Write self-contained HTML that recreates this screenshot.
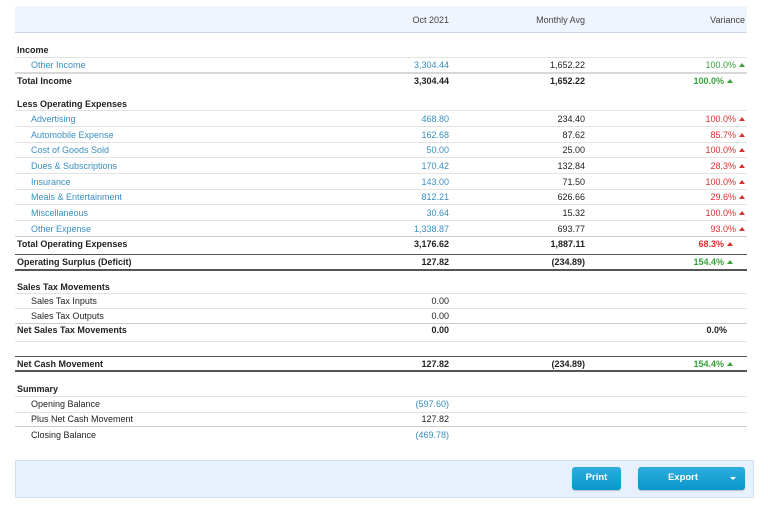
<!DOCTYPE html>
<html><head><meta charset="utf-8"><style>
body{margin:0;width:768px;height:512px;background:#fff;font-family:"Liberation Sans",Tahoma,sans-serif;font-size:9px;color:#222;position:relative;overflow:hidden}
.r{position:absolute;left:15px;width:732px;height:14px;line-height:14px}
.r span{position:absolute;white-space:nowrap}
.l{left:2px}.i{left:16px}
.a{right:298px;text-align:right}
.m{right:162px;text-align:right}
.v{right:2px;text-align:right}
.b{font-weight:bold}
.bl{color:#3a8fc0}
.g{color:#3aa03a}.rd{color:#d9302c}
.up{display:inline-block;width:0;height:0;border-left:3.5px solid transparent;border-right:3.5px solid transparent;border-bottom:4px solid currentColor;margin-left:3px;vertical-align:1px}
.ln{position:absolute;left:15px;width:732px;height:1px;background:#e2e2e2}
.dk{background:#555}
.btn{position:absolute;top:467px;height:23px;border-radius:3px;background:linear-gradient(#2eaee0,#0a95c8);color:#fff;font-weight:bold;font-size:9.5px;line-height:22px;text-align:center;box-shadow:0 1px 1px rgba(0,0,0,.2)}
</style></head><body>
<div style="position:absolute;left:15px;top:6px;width:732px;height:26px;background:#f0f4fc;border-bottom:1px solid #cdd6e4"></div>
<div class="r" style="top:13px;color:#444"><span class="a">Oct 2021</span><span class="m">Monthly Avg</span><span class="v">Variance</span></div>

<div class="r b" style="top:43px"><span class="l">Income</span></div>
<div class="ln" style="top:57px"></div>
<div class="r" style="top:58px"><span class="i bl">Other Income</span><span class="a bl">3,304.44</span><span class="m">1,652.22</span><span class="v g">100.0%<i class="up"></i></span></div>
<div class="ln" style="top:72px;height:2px;background:#d8d8d8"></div>
<div class="r b" style="top:74px"><span class="l">Total Income</span><span class="a">3,304.44</span><span class="m">1,652.22</span><span class="v g" style="right:14px">100.0%<i class="up"></i></span></div>

<div class="r b" style="top:97px"><span class="l">Less Operating Expenses</span></div>
<div class="ln" style="top:110px"></div>
<div class="r" style="top:112px"><span class="i bl">Advertising</span><span class="a bl">468.80</span><span class="m">234.40</span><span class="v rd">100.0%<i class="up"></i></span></div>
<div class="ln" style="top:126px"></div>
<div class="r" style="top:128px"><span class="i bl">Automobile Expense</span><span class="a bl">162.68</span><span class="m">87.62</span><span class="v rd">85.7%<i class="up"></i></span></div>
<div class="ln" style="top:142px"></div>
<div class="r" style="top:143px"><span class="i bl">Cost of Goods Sold</span><span class="a bl">50.00</span><span class="m">25.00</span><span class="v rd">100.0%<i class="up"></i></span></div>
<div class="ln" style="top:157px"></div>
<div class="r" style="top:159px"><span class="i bl">Dues &amp; Subscriptions</span><span class="a bl">170.42</span><span class="m">132.84</span><span class="v rd">28.3%<i class="up"></i></span></div>
<div class="ln" style="top:173px"></div>
<div class="r" style="top:175px"><span class="i bl">Insurance</span><span class="a bl">143.00</span><span class="m">71.50</span><span class="v rd">100.0%<i class="up"></i></span></div>
<div class="ln" style="top:189px"></div>
<div class="r" style="top:190px"><span class="i bl">Meals &amp; Entertainment</span><span class="a bl">812.21</span><span class="m">626.66</span><span class="v rd">29.6%<i class="up"></i></span></div>
<div class="ln" style="top:204px"></div>
<div class="r" style="top:206px"><span class="i bl">Miscellaneous</span><span class="a bl">30.64</span><span class="m">15.32</span><span class="v rd">100.0%<i class="up"></i></span></div>
<div class="ln" style="top:220px"></div>
<div class="r" style="top:222px"><span class="i bl">Other Expense</span><span class="a bl">1,338.87</span><span class="m">693.77</span><span class="v rd">93.0%<i class="up"></i></span></div>
<div class="ln" style="top:236px;background:#ccc"></div>
<div class="r b" style="top:237px"><span class="l">Total Operating Expenses</span><span class="a">3,176.62</span><span class="m">1,887.11</span><span class="v rd" style="right:14px">68.3%<i class="up"></i></span></div>
<div class="ln dk" style="top:254px"></div>
<div class="r b" style="top:255px"><span class="l">Operating Surplus (Deficit)</span><span class="a">127.82</span><span class="m">(234.89)</span><span class="v g" style="right:14px">154.4%<i class="up"></i></span></div>
<div class="ln dk" style="top:269px;height:2px"></div>

<div class="r b" style="top:280px"><span class="l">Sales Tax Movements</span></div>
<div class="ln" style="top:293px"></div>
<div class="r" style="top:294px"><span class="i">Sales Tax Inputs</span><span class="a">0.00</span></div>
<div class="ln" style="top:308px"></div>
<div class="r" style="top:309px"><span class="i">Sales Tax Outputs</span><span class="a">0.00</span></div>
<div class="ln" style="top:323px;background:#ccc"></div>
<div class="r b" style="top:323px"><span class="l">Net Sales Tax Movements</span><span class="a">0.00</span><span class="v" style="right:20px">0.0%</span></div>
<div class="ln" style="top:341px"></div>

<div class="ln dk" style="top:356px"></div>
<div class="r b" style="top:357px"><span class="l">Net Cash Movement</span><span class="a">127.82</span><span class="m">(234.89)</span><span class="v g" style="right:14px">154.4%<i class="up"></i></span></div>
<div class="ln dk" style="top:370px;height:2px"></div>

<div class="r b" style="top:382px"><span class="l">Summary</span></div>
<div class="ln" style="top:396px"></div>
<div class="r" style="top:397px"><span class="i">Opening Balance</span><span class="a bl">(597.60)</span></div>
<div class="ln" style="top:412px"></div>
<div class="r" style="top:412px"><span class="i">Plus Net Cash Movement</span><span class="a">127.82</span></div>
<div class="ln" style="top:426px;background:#ccc"></div>
<div class="r" style="top:428px"><span class="i">Closing Balance</span><span class="a bl">(469.78)</span></div>

<div style="position:absolute;left:15px;top:460px;width:737px;height:36px;background:#e7f0fd;border:1px solid #d2e0f4"></div>
<div class="btn" style="left:572px;width:49px">Print</div>
<div class="btn" style="left:638px;width:107px"><span style="position:absolute;left:0;width:90px">Export</span><span style="position:absolute;right:9px;top:10px;width:0;height:0;border-left:3px solid transparent;border-right:3px solid transparent;border-top:3px solid #fff"></span></div>
</body></html>
